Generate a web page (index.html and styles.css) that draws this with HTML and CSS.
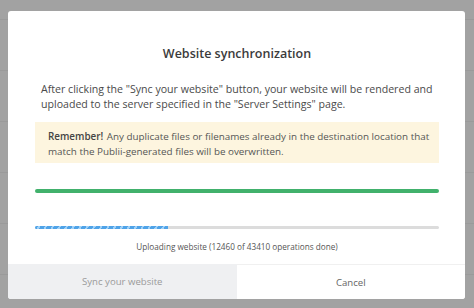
FILE: index.html
```html
<!DOCTYPE html>
<html lang="en">
<head>
<meta charset="utf-8">
<title>Website synchronization</title>
<link rel="stylesheet" href="styles.css">
</head>
<body>
<div class="backdrop">
  <div class="bg-rows">
    <div class="bg-row"></div><div class="bg-row"></div><div class="bg-row"></div>
    <div class="bg-row"></div><div class="bg-row"></div><div class="bg-row"></div>
  </div>
  <div class="modal">
    <div class="modal-body">
      <h1 class="title">Website synchronization</h1>
      <p class="intro">After clicking the "Sync your website" button, your website will be rendered and uploaded to the server specified in the "Server Settings" page.</p>
      <p class="notice"><b class="notice-strong">Remember!</b> Any duplicate files or filenames already in the destination location that match the Publii-generated files will be overwritten.</p>
      <div class="bar bar-done"><div class="fill fill-green"></div></div>
      <div class="bar bar-upload"><div class="fill fill-blue" style="width:33%"></div></div>
      <div class="status">Uploading website (12460 of 43410 operations done)</div>
    </div>
    <div class="buttons">
      <button class="btn btn-disabled">Sync your website</button>
      <button class="btn btn-cancel">Cancel</button>
    </div>
  </div>
</div>
</body>
</html>
```
FILE: styles.css
```css
html, body {
  margin: 0;
  padding: 0;
  width: 474px;
  height: 308px;
  overflow: hidden;
}
body {
  font-family: "Open Sans", "Noto Sans", sans-serif;
  background: #a2a2a2;
}
.backdrop {
  position: relative;
  width: 474px;
  height: 308px;
  background: #a2a2a2;
  padding: 11px 9px 9px 8px;
  box-sizing: border-box;
  overflow: hidden;
}
.bg-rows {
  position: absolute;
  left: 0;
  top: 19px;
  width: 474px;
}
.bg-row {
  height: 50px;
  border-top: 1px solid #9a9a9a;
}
.modal {
  position: relative;
  background: #ffffff;
  border-radius: 3px;
  height: 288px;
  display: flex;
  flex-direction: column;
  overflow: hidden;
}
.modal-body {
  flex: 1;
  padding: 0 26px 0 27px;
}
.title {
  margin: 34px 0 0;
  font-size: 12.5px;
  font-weight: 600;
  color: #3b3b3b;
  text-align: center;
  line-height: 18px;
}
.intro {
  margin: 19px 0 0;
  padding: 0 6px;
  font-size: 10.6px;
  line-height: 15px;
  color: #4a4a4a;
}
.notice {
  margin: 10px 0 0;
  background: #fdf5df;
  padding: 7px 6px 4px 13px;
  font-size: 9.85px;
  line-height: 15px;
  color: #555555;
}
.notice-strong {
  font-weight: 600;
  color: #444444;
  margin-right: 1px;
}
.bar {
  height: 3px;
  border-radius: 2px;
  overflow: hidden;
}
.bar-done {
  margin-top: 26px;
  height: 4px;
  background: #41b16c;
}
.fill {
  height: 100%;
}
.fill-green {
  width: 100%;
  background: #41b16c;
}
.bar-upload {
  margin-top: 33px;
  background: #dcdcdc;
}
.fill-blue {
  background: repeating-linear-gradient(-60deg, #4fa3e8 0 4px, #9fd0f7 4px 6px);
}
.status {
  margin-top: 12px;
  text-align: center;
  font-size: 8.2px;
  color: #555555;
  line-height: 12px;
}
.buttons {
  display: grid;
  grid-template-columns: 1fr 1fr;
  height: 35px;
}
.btn {
  border: 0;
  margin: 0;
  font-family: inherit;
  font-size: 9.6px;
  padding: 0;
}
.btn-disabled {
  background: #eff0f2;
  color: #9a9a9a;
}
.btn-cancel {
  background: #ffffff;
  color: #666666;
  border-top: 1px solid #f0f0f0;
}
```
